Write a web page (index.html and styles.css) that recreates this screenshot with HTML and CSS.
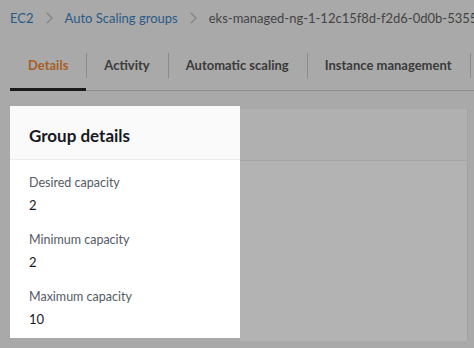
FILE: index.html
```html
<!DOCTYPE html>
<html lang="en">
<head>
    <meta charset="UTF-8">
    <title>Auto Scaling group details</title>
    <link rel="stylesheet" href="styles.css">
</head>
<body>

<nav class="breadcrumbs">
    <a href="#">EC2</a>
    <svg class="sep" width="7" height="12" viewBox="0 0 7 12"><polyline points="1,1 6,6 1,11" fill="none" stroke="#808080" stroke-width="1.2"/></svg>
    <a href="#">Auto Scaling groups</a>
    <svg class="sep" width="7" height="12" viewBox="0 0 7 12"><polyline points="1,1 6,6 1,11" fill="none" stroke="#808080" stroke-width="1.2"/></svg>
    <span class="current">eks-managed-ng-1-12c15f8d-f2d6-0d0b-5355-1f3a</span>
</nav>

<ul class="tabs">
    <li class="tab active">Details</li>
    <li class="tab">Activity</li>
    <li class="tab">Automatic scaling</li>
    <li class="tab">Instance management</li>
    <li class="tab">Monitoring</li>
</ul>

<div class="panel">
    <div class="card">
        <h2 class="card-header">Group details</h2>
        <dl class="card-body">
            <dt>Desired capacity</dt>
            <dd>2</dd>
            <dt>Minimum capacity</dt>
            <dd>2</dd>
            <dt>Maximum capacity</dt>
            <dd>10</dd>
        </dl>
    </div>
    <div class="panel-rest">
        <div class="panel-rest-header"></div>
    </div>
</div>

</body>
</html>
```

FILE: styles.css
```css
body {
    margin: 0;
    background-color: #a9a9a9;
    font-family: Lato, "Open Sans", Arial, sans-serif;
    overflow: hidden;
}

/* Breadcrumbs */
.breadcrumbs {
    display: flex;
    align-items: center;
    height: 36px;
    padding-left: 10px;
    font-size: 13px;
    white-space: nowrap;
}

.breadcrumbs a {
    color: #2c5a86;
    text-decoration: none;
}

.breadcrumbs .sep {
    flex-shrink: 0;
    margin: 0 12px;
}

.breadcrumbs .current {
    color: #444;
}

/* Tabs */
.tabs {
    display: flex;
    list-style: none;
    margin: 17px 0 0 10px;
    padding: 0;
    border-bottom: 1px solid #8e8e8e;
    white-space: nowrap;
}

.tab {
    position: relative;
    padding: 0 18px;
    height: 38px;
    display: flex;
    align-items: flex-start;
    padding-top: 4px;
    font-size: 13px;
    font-weight: 700;
    color: #3b3b3b;
    border-bottom: 3px solid transparent;
    box-sizing: border-box;
    margin-bottom: -1px;
}

.tab + .tab::before {
    content: "";
    position: absolute;
    left: 0;
    top: 0;
    height: 25px;
    border-left: 1px solid #8a8a8a;
}

.tab.active {
    color: #a85f24;
    border-bottom-color: #1a1a1a;
}

/* Panel */
.panel {
    display: flex;
    margin: 18px 6px 0 10px;
    height: 232px;
}

.card {
    width: 230px;
    margin-top: -3px;
    margin-bottom: 3px;
    background-color: #fff;
}

.card-header {
    margin: 0;
    height: 54px;
    padding: 5px 19px 0;
    box-sizing: border-box;
    display: flex;
    align-items: center;
    font-size: 17px;
    font-weight: 700;
    color: #16191f;
    background-color: #fafafa;
    border-bottom: 1px solid #eaeded;
}

.card-body {
    margin: 0;
    padding: 12px 19px 0;
}

.card-body dt {
    font-size: 12.5px;
    color: #545b64;
    line-height: 22px;
}

.card-body dd {
    margin: 0 0 13px;
    font-size: 13px;
    color: #16191f;
    line-height: 22px;
}

.card-body dd:last-child {
    margin-bottom: 0;
}

.panel-rest {
    flex: 1;
    background-color: #b3b3b3;
    border-right: 1px solid #a2a2a2;
}

.panel-rest-header {
    height: 51px;
    background-color: #b0b0b0;
    border-bottom: 1px solid #a6a6a6;
}
```
